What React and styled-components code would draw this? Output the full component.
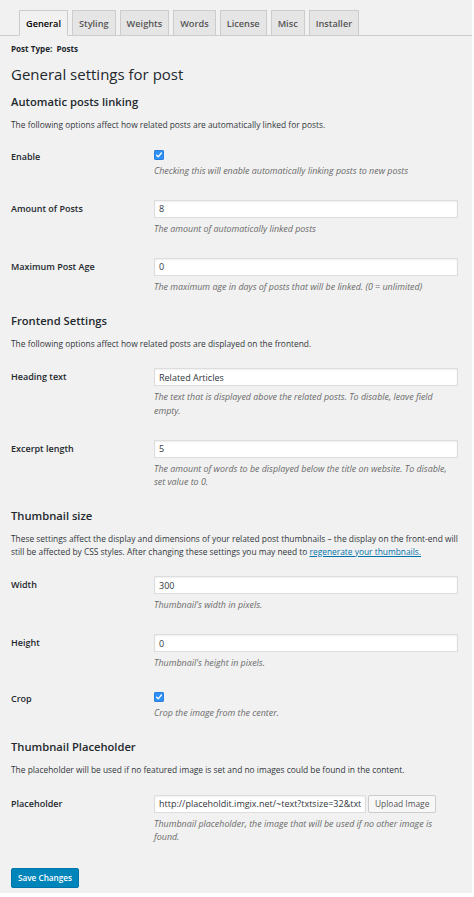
import React from "react";
import styled, { createGlobalStyle } from "styled-components";

const GlobalStyle = createGlobalStyle`
  body {
    margin: 0;
    background: #fff;
    font-family: "Open Sans", "Liberation Sans", sans-serif;
    color: #23282d;
  }
`;

const Panel = styled.div`
  width: 472px;
  min-height: 893px;
  background: #f1f1f1;
  box-sizing: border-box;
  padding-bottom: 5px;
`;

const TabBar = styled.nav`
  display: flex;
  gap: 4px;
  padding: 10px 0 0 19px;
  border-bottom: 1px solid #ccc;
`;

const Tab = styled.a`
  display: flex;
  align-items: center;
  height: 24px;
  padding: 0 6px;
  margin-bottom: -1px;
  border: 1px solid #ccc;
  border-bottom: ${(p) => (p.$active ? "1px solid #f1f1f1" : "none")};
  background: ${(p) => (p.$active ? "#f1f1f1" : "#e5e5e5")};
  color: ${(p) => (p.$active ? "#000" : "#555")};
  font-size: 9.2px;
  font-weight: 600;
  text-decoration: none;
`;

const Content = styled.div`
  padding: 0 10px 0 11px;
`;

const PostType = styled.div`
  margin-top: 7px;
  font-size: 8.1px;
  line-height: 12px;
  font-weight: 700;
`;

const PageTitle = styled.h1`
  margin: 10px 0 12px;
  font-size: 15px;
  line-height: 18px;
  font-weight: 400;
`;

const SectionTitle = styled.h2`
  margin: 10px 0 10px;
  font-size: 11.2px;
  line-height: 14px;
  font-weight: 600;
`;

const SectionDesc = styled.p`
  margin: 0 0 6px;
  font-size: 8.4px;
  line-height: 12.5px;
  color: #32373c;
`;

const Link = styled.a`
  color: #0073aa;
  text-decoration: underline;
`;

const Row = styled.div`
  display: grid;
  grid-template-columns: 143px 304px;
  padding: 12px 0 10.5px;
`;

const Label = styled.label`
  font-size: 9px;
  font-weight: 600;
  line-height: ${(p) => (p.$compact ? "14px" : "18px")};
`;

const Field = styled.div`
  display: flex;
  flex-direction: column;
`;

const Controls = styled.div`
  display: flex;
  gap: 2px;
`;

const TextInput = styled.input`
  box-sizing: border-box;
  width: ${(p) => p.$width || "100%"};
  height: 18px;
  margin: 0;
  padding: 0 4px;
  border: 1px solid #ddd;
  box-shadow: inset 0 1px 2px rgba(0, 0, 0, 0.07);
  background: #fff;
  font-family: inherit;
  font-size: 9px;
  color: #32373c;
  outline: none;
`;

const Box = styled.span`
  display: flex;
  align-items: center;
  justify-content: center;
  width: 10px;
  height: 10px;
  border-radius: 2px;
  background: #2f8ff4;
  box-shadow: inset 0 0 0 0.5px #1f73d0;
`;

const Description = styled.p`
  margin: 4px 0 0;
  font-size: 8.9px;
  line-height: 13.5px;
  font-style: italic;
  color: #6a6a6a;
  padding-right: 6px;
`;

const UploadButton = styled.button`
  height: 18px;
  padding: 0 6px;
  border: 1px solid #ccc;
  border-radius: 2px;
  background: #f7f7f7;
  color: #555;
  font-family: inherit;
  font-size: 8.4px;
  white-space: nowrap;
`;

const SaveButton = styled.button`
  margin-top: 13.5px;
  height: 20px;
  padding: 0 6px;
  border: 1px solid #0073aa;
  border-radius: 2px;
  background: #0085ba;
  color: #fff;
  font-family: inherit;
  font-size: 8.2px;
  font-weight: 600;
`;

const Check = () => (
  <Box>
    <svg width="8" height="8" viewBox="0 0 8 8">
      <path d="M1.6 4.2 L3.2 5.8 L6.4 2" fill="none" stroke="#fff" strokeWidth="1.3" strokeLinecap="round" strokeLinejoin="round" />
    </svg>
  </Box>
);

const tabs = ["General", "Styling", "Weights", "Words", "License", "Misc", "Installer"];

const TextRow = ({ label, value, desc }) => (
  <Row>
    <Label>{label}</Label>
    <Field>
      <TextInput readOnly value={value} />
      <Description>{desc}</Description>
    </Field>
  </Row>
);

const CheckRow = ({ label, desc }) => (
  <Row>
    <Label $compact>{label}</Label>
    <Field>
      <Check />
      <Description>{desc}</Description>
    </Field>
  </Row>
);

export default function App() {
  return (
    <Panel>
      <GlobalStyle />
      <TabBar>
        {tabs.map((t, i) => (
          <Tab key={t} $active={i === 0}>{t}</Tab>
        ))}
      </TabBar>
      <Content>
        <PostType>Post Type:&nbsp; Posts</PostType>
        <PageTitle>General settings for post</PageTitle>

        <SectionTitle>Automatic posts linking</SectionTitle>
        <SectionDesc>The following options affect how related posts are automatically linked for posts.</SectionDesc>
        <CheckRow label="Enable" desc="Checking this will enable automatically linking posts to new posts" />
        <TextRow label="Amount of Posts" value="8" desc="The amount of automatically linked posts" />
        <TextRow label="Maximum Post Age" value="0" desc="The maximum age in days of posts that will be linked. (0 = unlimited)" />

        <SectionTitle>Frontend Settings</SectionTitle>
        <SectionDesc>The following options affect how related posts are displayed on the frontend.</SectionDesc>
        <TextRow label="Heading text" value="Related Articles" desc="The text that is displayed above the related posts. To disable, leave field empty." />
        <TextRow label="Excerpt length" value="5" desc="The amount of words to be displayed below the title on website. To disable, set value to 0." />

        <SectionTitle>Thumbnail size</SectionTitle>
        <SectionDesc>
          These settings affect the display and dimensions of your related post thumbnails – the display on the front-end will
          still be affected by CSS styles. After changing these settings you may need to <Link href="#">regenerate your thumbnails.</Link>
        </SectionDesc>
        <TextRow label="Width" value="300" desc="Thumbnail's width in pixels." />
        <TextRow label="Height" value="0" desc="Thumbnail's height in pixels." />
        <CheckRow label="Crop" desc="Crop the image from the center." />

        <SectionTitle>Thumbnail Placeholder</SectionTitle>
        <SectionDesc>The placeholder will be used if no featured image is set and no images could be found in the content.</SectionDesc>
        <Row>
          <Label>Placeholder</Label>
          <Field>
            <Controls>
              <TextInput $width="212px" readOnly value="http://placeholdit.imgix.net/~text?txtsize=32&txt=No+image&w=300&h=200" />
              <UploadButton>Upload Image</UploadButton>
            </Controls>
            <Description>Thumbnail placeholder, the image that will be used if no other image is found.</Description>
          </Field>
        </Row>

        <SaveButton>Save Changes</SaveButton>
      </Content>
    </Panel>
  );
}
